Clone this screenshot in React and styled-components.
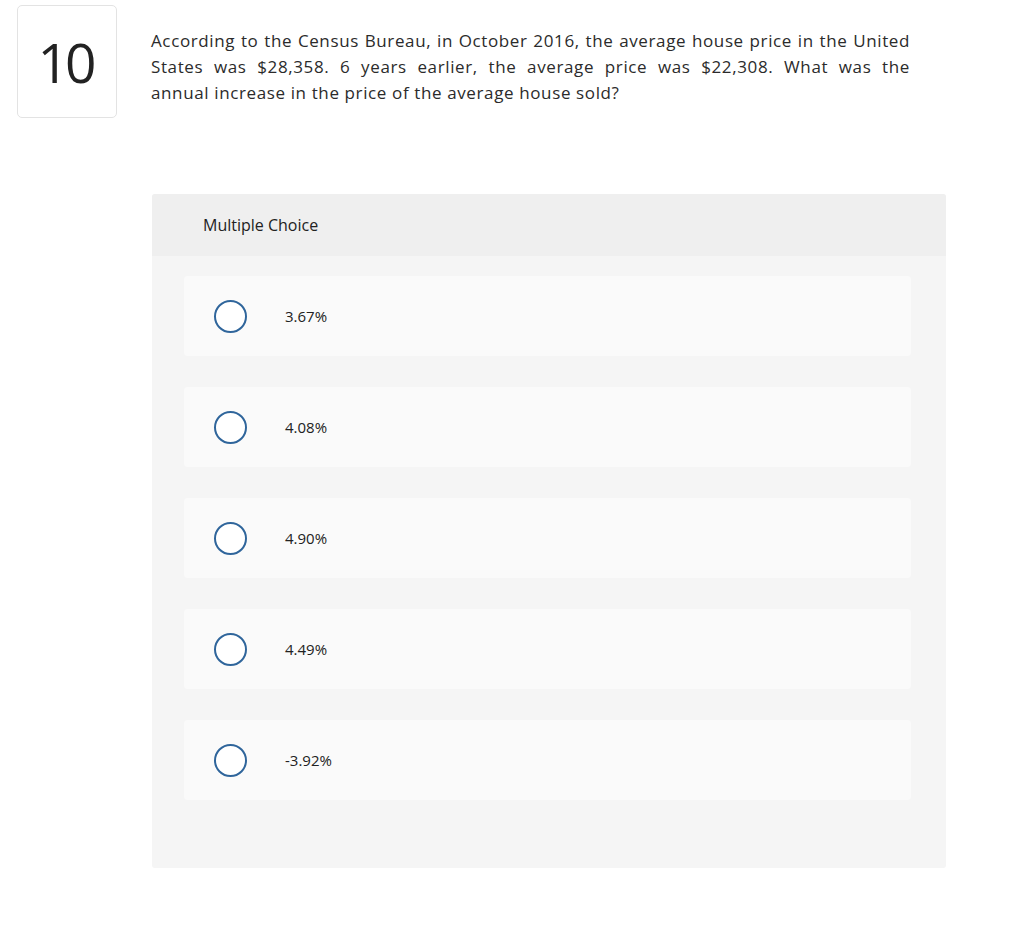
import React from 'react'
import styled, { createGlobalStyle } from 'styled-components'

const GlobalStyle = createGlobalStyle`
  body {
    margin: 0;
    background: #fff;
    font-family: 'Open Sans', 'Liberation Sans', sans-serif;
    color: #333;
  }
`

// lines kept as in the source layout so the justified breaks match
const questionLines = [
  'According to the Census Bureau, in October 2016, the average house price in the United',
  'States was $28,358. 6 years earlier, the average price was $22,308. What was the',
  'annual increase in the price of the average house sold?',
]

const options = ['3.67%', '4.08%', '4.90%', '4.49%', '-3.92%']

const App = () => {
  return (
    <Page>
      <GlobalStyle />
      <QuestionRow>
        <NumberBox>10</NumberBox>
        <QuestionText>
          {questionLines.map((line, i) => (
            <Line key={i} $last={i === questionLines.length - 1}>
              {line}
            </Line>
          ))}
        </QuestionText>
      </QuestionRow>
      <Panel>
        <PanelHeader>Multiple Choice</PanelHeader>
        <OptionList>
          {options.map((opt) => (
            <OptionCard key={opt}>
              <Radio />
              <OptionLabel>{opt}</OptionLabel>
            </OptionCard>
          ))}
        </OptionList>
      </Panel>
    </Page>
  )
}

const Page = styled.div`
  width: 1024px;
  height: 940px;
  padding: 5px 0 0 17px;
  box-sizing: border-box;
`
const QuestionRow = styled.div`
  display: flex;
  align-items: flex-start;
  gap: 34px;
`
const NumberBox = styled.div`
  width: 100px;
  height: 113px;
  flex-shrink: 0;
  border: 1px solid #e3e3e3;
  border-radius: 5px;
  display: flex;
  align-items: center;
  justify-content: center;
  font-size: 55px;
  letter-spacing: -4px;
  padding-right: 4px;
  color: #222;
  box-sizing: border-box;
`
const QuestionText = styled.div`
  margin-top: 23px;
  width: 759px;
  font-size: 17px;
  line-height: 26px;
  letter-spacing: 0.62px;
  color: #2b2b2b;
`
const Line = styled.span`
  display: block;
  white-space: nowrap;
  text-align: justify;
  text-align-last: ${(p) => (p.$last ? 'left' : 'justify')};
`
const Panel = styled.div`
  width: 794px;
  margin: 76px 0 0 135px;
  background: #f5f5f5;
  border-radius: 3px;
  overflow: hidden;
`
const PanelHeader = styled.div`
  height: 62px;
  background: #efefef;
  display: flex;
  align-items: center;
  padding-left: 51px;
  font-size: 16px;
  color: #222;
`
const OptionList = styled.div`
  display: flex;
  flex-direction: column;
  gap: 31px;
  padding: 20px 35px 68px 32px;
`
const OptionCard = styled.div`
  height: 80px;
  background: #fafafa;
  border-radius: 4px;
  display: flex;
  align-items: center;
  padding-left: 30px;
`
const Radio = styled.span`
  width: 33px;
  height: 33px;
  box-sizing: border-box;
  border: 2px solid #2f659b;
  border-radius: 50%;
  background: #fff;
  flex-shrink: 0;
`
const OptionLabel = styled.span`
  margin-left: 38px;
  font-size: 15px;
  color: #222;
`

export default App
